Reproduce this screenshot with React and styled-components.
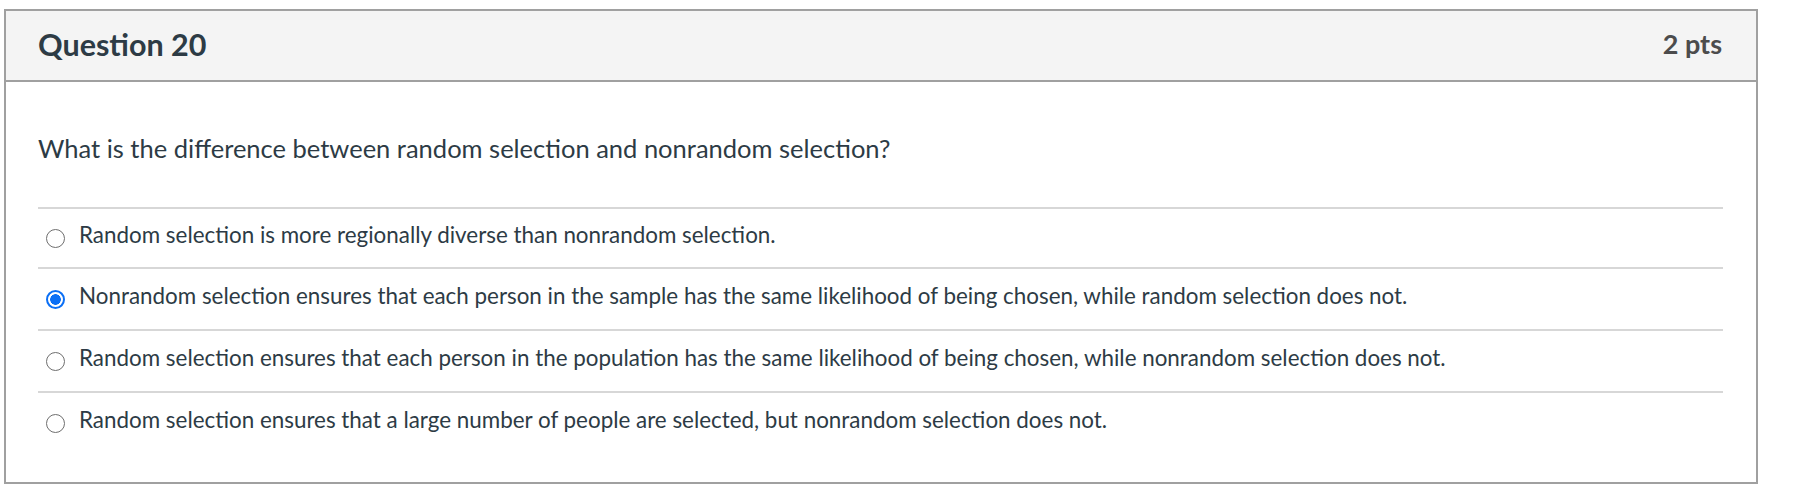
import React from "react";
import styled, { createGlobalStyle } from "styled-components";

const GlobalStyle = createGlobalStyle`
	body {
		margin: 0;
		background: #ffffff;
		font-family: Lato, "Noto Sans", sans-serif;
	}
`;

const Page = styled.div`
	padding: 9px 40px 0 4px;
`;

const Card = styled.div`
	border: 2px solid #a0a0a0;
	background: #ffffff;
`;

const Header = styled.div`
	display: flex;
	justify-content: space-between;
	align-items: center;
	height: 65px;
	padding: 0 34px 4px 32px;
	background: #f4f4f4;
	border-bottom: 2px solid #a0a0a0;
`;

const Title = styled.h2`
	margin: 0;
	font-size: 30.5px;
	font-weight: 700;
	color: #2d3b45;
`;

const Points = styled.div`
	font-size: 27px;
	font-weight: 700;
	color: #4c4c4c;
`;

const Body = styled.div`
	padding: 48px 33px 29px 32px;
`;

const QuestionText = styled.p`
	margin: 0 0 41px;
	font-size: 25.5px;
	line-height: 36px;
	color: #2d3b45;
`;

const Answers = styled.div`
	display: flex;
	flex-direction: column;
`;

const Answer = styled.label`
	display: flex;
	align-items: center;
	gap: 14px;
	height: ${(p) => (p.$first ? "58px" : "60px")};
	padding-left: 8px;
	border-top: 2px solid #d7d7d7;
	font-size: 22.4px;
	color: #2d3b45;
`;

const AnswerText = styled.span`
	padding-bottom: 8px;
`;

const Radio = styled.input`
	appearance: none;
	box-sizing: border-box;
	flex: none;
	width: 19px;
	height: 19px;
	margin: 0;
	border: 1.6px solid #6e6e6e;
	border-radius: 50%;
	background: #ffffff;

	&:checked {
		border: 2px solid #0b6ff5;
		background: radial-gradient(circle, #0b6ff5 0 5px, #ffffff 5.6px);
	}
`;

const answers = [
	"Random selection is more regionally diverse than nonrandom selection.",
	"Nonrandom selection ensures that each person in the sample has the same likelihood of being chosen, while random selection does not.",
	"Random selection ensures that each person in the population has the same likelihood of being chosen, while nonrandom selection does not.",
	"Random selection ensures that a large number of people are selected, but nonrandom selection does not.",
];

export default function App() {
	return (
		<Page>
			<GlobalStyle />
			<Card>
				<Header>
					<Title>Question 20</Title>
					<Points>2 pts</Points>
				</Header>
				<Body>
					<QuestionText>
						What is the difference between random selection and nonrandom
						selection?
					</QuestionText>
					<Answers>
						{answers.map((text, i) => (
							<Answer key={i} $first={i === 0}>
								<Radio type="radio" name="q20" defaultChecked={i === 1} />
								<AnswerText>{text}</AnswerText>
							</Answer>
						))}
					</Answers>
				</Body>
			</Card>
		</Page>
	);
}
